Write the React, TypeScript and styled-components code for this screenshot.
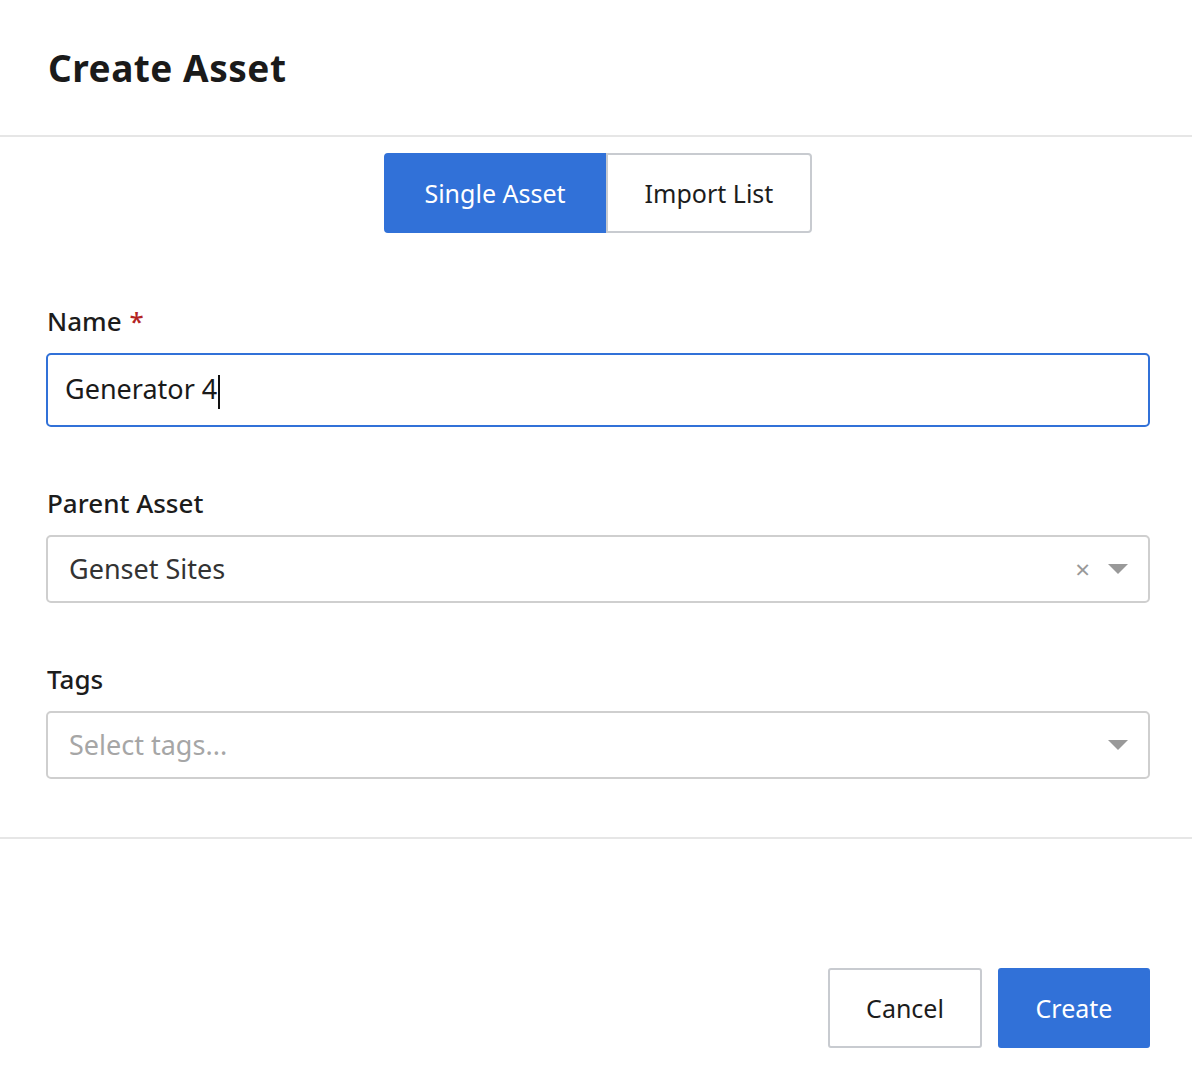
import React from "react";
import styled, { createGlobalStyle } from "styled-components";

const Global = createGlobalStyle`
  body { margin: 0; font-family: "Noto Sans", "Open Sans", sans-serif; color: #1c1c1c; background: #fff; }
  * { box-sizing: border-box; }
`;
const Page = styled.div`width: 1192px; height: 1074px; display: flex; flex-direction: column;`;
const Header = styled.div`height: 137px; padding: 0 48px; display: flex; align-items: center; border-bottom: 2px solid #e6e6e6;`;
const Title = styled.h1`margin: 0; font-size: 37px; font-weight: 700; letter-spacing: 0.5px; color: #1a1a1a;`;
const Body = styled.div`padding: 16px 42px 0 46px; display: flex; flex-direction: column; height: 702px; border-bottom: 2px solid #e6e6e6;`;
const Tabs = styled.div`display: flex; justify-content: center; margin-bottom: 70px;`;
const Tab = styled.div<{ $active?: boolean }>`
  height: 80px; display: flex; align-items: center; justify-content: center; font-size: 25px;
  width: ${p => (p.$active ? 222 : 206)}px;
  background: ${p => (p.$active ? "#3171d8" : "#fff")};
  color: ${p => (p.$active ? "#fff" : "#1c1c1c")};
  border: 2px solid ${p => (p.$active ? "#3171d8" : "#c8cbd0")};
  border-radius: ${p => (p.$active ? "4px 0 0 4px" : "0 4px 4px 0")};
`;
const Label = styled.div`font-size: 26px; font-weight: 500; margin: 0 0 14px 1px; line-height: 36px;`;
const Star = styled.span`color: #b32424; margin-left: 8px;`;
const Field = styled.div<{ $focus?: boolean }>`
  height: ${p => (p.$focus ? 80 : 74)}px; border: 2px solid ${p => (p.$focus ? "#3171d8" : "#cfcfcf")};
  border-radius: 5px; display: flex; align-items: center; padding: 0 20px 0 ${p => (p.$focus ? 17 : 21)}px;
  font-size: 27px; margin-bottom: 58px;
`;
const Value = styled.span<{ $muted?: boolean; $dim?: boolean }>`flex: 1; color: ${p => (p.$muted ? "#a6a6a6" : p.$dim ? "#333" : "#1a1a1a")};`;
const Caret = styled.span`display: inline-block; width: 2px; height: 34px; background: #111; vertical-align: middle; margin-left: 1px;`;
const Clear = styled.span`color: #999; font-size: 26px; margin-right: 18px;`;
const Arrow = styled.span`width: 0; height: 0; border-left: 10px solid transparent; border-right: 10px solid transparent; border-top: 10px solid #999;`;
const Footer = styled.div`flex: 1; display: flex; justify-content: flex-end; align-items: flex-end; gap: 16px; padding: 0 42px 26px 0;`;
const Btn = styled.button<{ $primary?: boolean }>`
  height: 80px; font-family: inherit; font-size: 25px; border-radius: 3px; cursor: pointer;
  width: ${p => (p.$primary ? 152 : 154)}px;
  background: ${p => (p.$primary ? "#3171d8" : "#fff")};
  color: ${p => (p.$primary ? "#fff" : "#1c1c1c")};
  border: 2px solid ${p => (p.$primary ? "#3171d8" : "#c8cbd0")};
`;

export default function App() {
  return (
    <Page>
      <Global />
      <Header><Title>Create Asset</Title></Header>
      <Body>
        <Tabs>
          <Tab $active>Single Asset</Tab>
          <Tab>Import List</Tab>
        </Tabs>
        <Label>Name<Star>*</Star></Label>
        <Field $focus><Value>Generator 4<Caret /></Value></Field>
        <Label>Parent Asset</Label>
        <Field><Value $dim>Genset Sites</Value><Clear>×</Clear><Arrow /></Field>
        <Label>Tags</Label>
        <Field><Value $muted>Select tags...</Value><Arrow /></Field>
      </Body>
      <Footer>
        <Btn>Cancel</Btn>
        <Btn $primary>Create</Btn>
      </Footer>
    </Page>
  );
}
